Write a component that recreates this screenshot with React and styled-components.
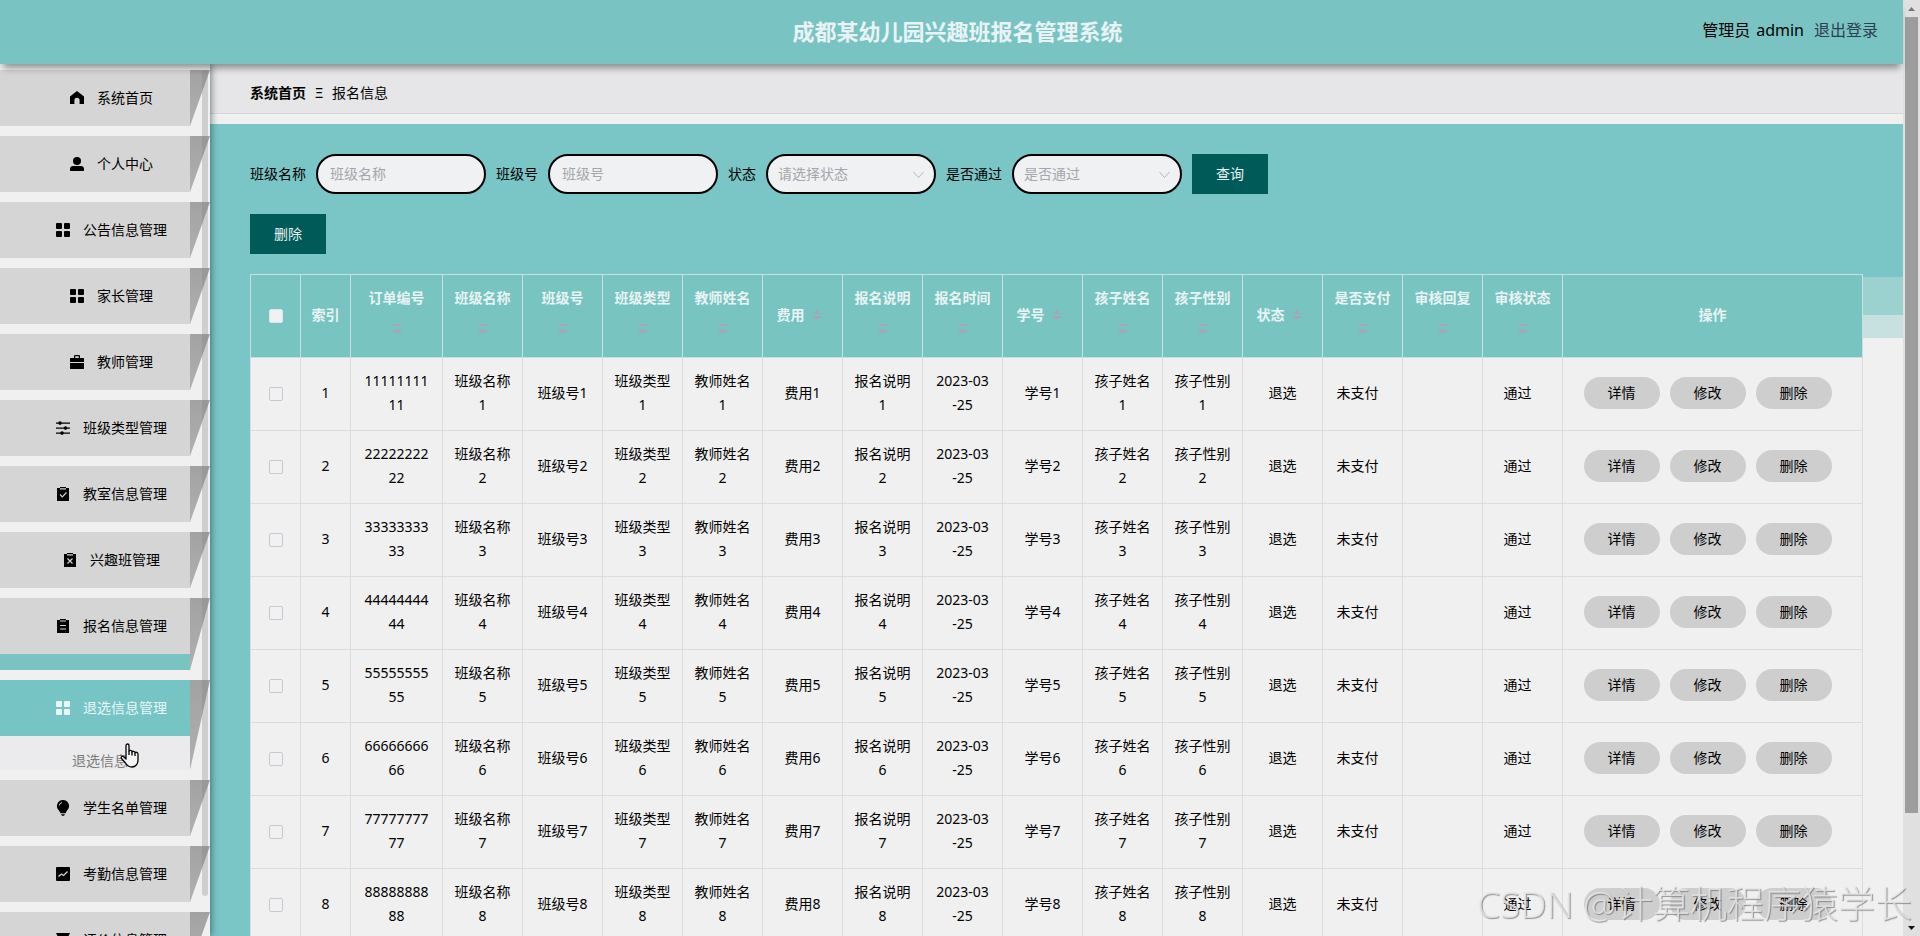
import React from 'react';
import styled, { createGlobalStyle, css } from 'styled-components';

const GlobalStyle = createGlobalStyle`
    * {
        box-sizing: border-box;
    }
    body {
        margin: 0;
        overflow: hidden;
        background: #f0f0f0;
        color: #000;
        font-family: "Noto Sans", "Noto Sans CJK SC", sans-serif;
        font-size: 14px;
    }
    button, input, select {
        font-family: inherit;
        font-size: 14px;
    }
`;

const Page = styled.div`
    display: flex;
    height: 100vh;
    overflow: hidden;
`;

const Shell = styled.div`
    display: flex;
    flex-direction: column;
    flex: 1;
    min-width: 0;
`;

const Header = styled.header`
    position: relative;
    z-index: 3;
    display: grid;
    grid-template-columns: 1fr auto 1fr;
    align-items: center;
    flex: none;
    height: 64px;
    padding: 0 25px 0 37px;
    background: #79c4c3;
    box-shadow: 0 7px 7px -3px rgba(0, 0, 0, 0.4);
`;

const Title = styled.h1`
    grid-column: 2;
    margin: 0;
    padding-bottom: 2px;
    color: #e8f3f6;
    font-size: 22px;
    line-height: 32px;
`;

const UserBar = styled.div`
    display: flex;
    justify-content: flex-end;
    gap: 10px;
    padding-bottom: 4px;
    font-size: 16px;
    line-height: 24px;
`;

const UserName = styled.span`
    display: flex;
    gap: 6px;
`;

const Logout = styled.a`
    color: #2c3e50;
    text-decoration: none;
`;

const Body = styled.div`
    display: flex;
    flex: 1;
    min-height: 0;
`;

const Sidebar = styled.nav`
    position: relative;
    z-index: 2;
    flex: none;
    width: 210px;
    padding-top: 6px;
    overflow: clip;
    overflow-clip-margin: 12px;
    background: #f0f0f0;
    box-shadow: 1px 0 7px rgba(0, 40, 30, 0.55);
`;

const MenuGroup = styled.div`
    display: flex;
    margin-bottom: 10px;
`;

const MenuMain = styled.div`
    width: 190px;
`;

const MenuItem = styled.a`
    display: flex;
    align-items: center;
    justify-content: center;
    gap: 8px;
    height: 56px;
    padding-left: 28px;
    background: ${(p) => (p.$active ? '#76c5c4' : '#d5d5d5')};
    color: ${(p) => (p.$active ? '#e8f6f8' : '#000')};
    text-decoration: none;
    line-height: 20px;
`;

const MenuIcon = styled.svg`
    flex: none;
    width: 24px;
    height: 14px;
`;

const Fold = styled.div`
    width: 20px;
    background: linear-gradient(#a2a2a2, #b0b0b0);
    clip-path: polygon(0 0, 100% 0, 0 100%);
`;

const Collapsing = styled.div`
    height: 16px;
    background: #79c4c0;
`;

const SubMenu = styled.div`
    height: 34px;
    padding: 15px 0 0 72px;
    overflow: hidden;
    background: #ebebed;
`;

const SubLink = styled.a`
    color: #7c7c7c;
    text-decoration: none;
    line-height: 20px;
`;

const SideThumb = styled.div`
    position: absolute;
    top: 6px;
    bottom: 40px;
    left: 202px;
    width: 6px;
    border-radius: 3px;
    background: rgba(130, 130, 135, 0.3);
`;

const Main = styled.main`
    display: flex;
    flex-direction: column;
    flex: 1;
    min-width: 0;
    overflow: hidden;
`;

const Breadcrumb = styled.div`
    display: flex;
    align-items: center;
    gap: 8px;
    flex: none;
    height: 50px;
    padding: 8px 40px 0;
    border-bottom: 1px solid #d6d6d8;
    background: #e6e5e7;
    line-height: 20px;
`;

const Separator = styled.span`
    width: 10px;
    font-size: 14px;
    text-align: center;
`;

// the fill fades out in steps along the right gutter
const Content = styled.section`
    flex: 1;
    min-height: 0;
    margin-top: 10px;
    padding: 30px 40px 0;
    background:
        linear-gradient(#7ac5c6, #7ac5c6) 0 0 / 40px 100% no-repeat,
        linear-gradient(#7ac5c6 153px, #9bd2cf 153px, #9bd2cf 191px, #c6e1e0 191px, #c6e1e0 214px, #f0f0f0 214px);
`;

const Filters = styled.form`
    display: flex;
    align-items: center;
    gap: 10px;
    margin-bottom: 20px;
`;

const Label = styled.label`
    line-height: 20px;
`;

const fieldStyle = css`
    width: 170px;
    height: 40px;
    padding: 0 12px 2px;
    border: 2px solid #000;
    border-radius: 20px;
    outline: none;
    background: #f0f1f2;
    color: #a3a6ac;
`;

const TextField = styled.input`
    ${fieldStyle}
    &::placeholder {
        color: #a3a6ac;
    }
`;

const SelectWrap = styled.div`
    position: relative;
`;

const SelectField = styled.select`
    ${fieldStyle}
    display: block;
    padding: 0 10px 2px;
    appearance: none;
`;

const Chevron = styled.svg`
    position: absolute;
    top: 17px;
    right: 12px;
    width: 11px;
    height: 8px;
    pointer-events: none;
`;

const SolidButton = styled.button`
    width: 76px;
    height: 40px;
    padding: 0 0 2px;
    border: 0;
    background: #005a58;
    color: #eaf3f3;
`;

const Toolbar = styled.div`
    display: flex;
    margin-bottom: 20px;
`;

const Table = styled.table`
    width: 100%;
    border-collapse: collapse;
    table-layout: fixed;
    background: #f0f0f0;
    line-height: 24px;
    text-align: center;
`;

const Col = styled.col`
    width: ${(p) => (p.$width ? `${p.$width}px` : 'auto')};
`;

const Th = styled.th`
    height: 83px;
    padding: 0 10px 2px;
    border: 1px solid #c6e0e4;
    background: #77c4c0;
    color: #e8f3f5;
`;

const HeadCell = styled.div`
    display: flex;
    flex-wrap: wrap;
    align-items: center;
    justify-content: center;
`;

const Caret = styled.svg`
    width: 24px;
    height: 34px;
`;

const Td = styled.td`
    height: 73px;
    padding: 0 ${(p) => (p.$loose ? '20px' : '10px')} 2px 10px;
    border: 1px solid #dcdcdf;
    white-space: pre-line;
    word-break: break-all;
`;

const Check = styled.input`
    display: block;
    width: 14px;
    height: 14px;
    margin: 2px auto 0;
    border: 1px solid ${(p) => (p.$head ? '#d8e6ea' : '#c9c9cc')};
    border-radius: 2px;
    appearance: none;
    background: #f0f1f3;
`;

const Actions = styled.div`
    display: flex;
    justify-content: center;
    gap: 4px;
    padding-right: 4px;
`;

const PillButton = styled.button`
    width: 76px;
    height: 32px;
    margin-right: 6px;
    padding: 0 0 2px;
    border: 0;
    border-radius: 16px;
    background: #cecece;
    color: #000;
`;

const ScrollTrack = styled.div`
    display: flex;
    flex-direction: column;
    align-items: center;
    flex: none;
    width: 17px;
    background: #e0e0e0;
`;

const ScrollArrow = styled.svg`
    flex: none;
    width: 17px;
    height: 17px;
`;

const ScrollThumb = styled.div`
    flex: 796;
    width: 13px;
    background: #9d9d9d;
`;

const ScrollRest = styled.div`
    flex: 106;
`;

const Watermark = styled.div`
    position: fixed;
    right: 8px;
    bottom: 6px;
    z-index: 5;
    color: rgba(232, 232, 232, 0.8);
    font-size: 37px;
    font-weight: 300;
    line-height: 52px;
    text-shadow: 1px 1px 1px rgba(110, 110, 110, 0.7);
    white-space: nowrap;
    pointer-events: none;
`;

const Pointer = styled.svg`
    position: absolute;
    top: 679px;
    left: 120px;
    width: 20px;
    height: 25px;
`;

const icons = {
    home: <path d="M7 0 0 5.6V13h4.4V9.4a2.6 2.6 0 0 1 5.2 0V13H14V5.6z" />,
    user: <path d="M7 0a4 4 0 1 1 0 8 4 4 0 0 1 0-8M3 9h8c2 0 3 1.400 3 3v2H0v-2c0-1.600 1-3 3-3" />,
    grid: (
        <g>
            <rect width="6" height="6" rx="1" />
            <rect x="8" width="6" height="6" rx="1" />
            <rect y="8" width="6" height="6" rx="1" />
            <rect x="8" y="8" width="6" height="6" rx="1" />
        </g>
    ),
    case: <path d="M4 3V1.200C4 .5 4.500 0 5.200 0h3.600C9.500 0 10 .5 10 1.200V3h3.500l.5.5V7H0V3.500L.5 3zm1.200 0h3.600V1.200H5.200zM0 8h14v5.500l-.5.500H.5l-.5-.5z" />,
    sliders: (
        <g>
            <path d="M0 1.500h14v1.200H0zM0 6.500h14v1.200H0zM0 11.500h14v1.200H0z" />
            <circle cx="4" cy="2.100" r="1.800" />
            <circle cx="9.500" cy="7.100" r="1.800" />
            <circle cx="6" cy="12.100" r="1.800" />
        </g>
    ),
    claim: (
        <g>
            <path d="M1 1h3V0h6v1h3v13H1z" />
            <path d="M4 1.800h6M4 7.500l2.300 2.300 4.200-4.300" fill="none" stroke="#d5d5d5" strokeWidth="1.200" />
        </g>
    ),
    release: (
        <g>
            <path d="M1 1h3V0h6v1h3v13H1z" />
            <path d="M4 1.800h6M4.500 5.500l5 5M9.500 5.500l-5 5" fill="none" stroke="#d5d5d5" strokeWidth="1.200" />
        </g>
    ),
    order: (
        <g>
            <path d="M1 1h3V0h6v1h3v13H1z" />
            <path d="M4 2h6M4 6.500h6M4 10h6" fill="none" stroke="#d5d5d5" strokeWidth="1.200" />
        </g>
    ),
    bulb: (
        <g>
            <path d="M7-1a6 6 0 0 1 4 10.500L9.500 12.300h-5L3 9.500A6 6 0 0 1 7-1M5 13.300h4l-1 1.400H6z" />
            <path d="M3.200 4.500A3.500 3.500 0 0 1 6 1.500" fill="none" stroke="#d5d5d5" strokeWidth="1" />
        </g>
    ),
    chart: (
        <g>
            <rect width="14" height="14" rx="1" />
            <path d="M2.500 9.500 5.500 7l2 1.500L11.500 4.500" fill="none" stroke="#d5d5d5" strokeWidth="1.200" />
        </g>
    ),
    shop: <path d="M0 0h14l-2 4 2 3v7H0V7l2-3z" />,
};

const menu = [
    { icon: 'home', text: '系统首页' },
    { icon: 'user', text: '个人中心' },
    { icon: 'grid', text: '公告信息管理' },
    { icon: 'grid', text: '家长管理' },
    { icon: 'case', text: '教师管理' },
    { icon: 'sliders', text: '班级类型管理' },
    { icon: 'claim', text: '教室信息管理' },
    { icon: 'release', text: '兴趣班管理' },
    { icon: 'order', text: '报名信息管理', collapsing: true },
    { icon: 'grid', text: '退选信息管理', active: true, child: '退选信息' },
    { icon: 'bulb', text: '学生名单管理' },
    { icon: 'chart', text: '考勤信息管理' },
    { icon: 'shop', text: '评价信息管理' },
];

const columns = [
    '订单编号', '班级名称', '班级号', '班级类型', '教师姓名', '费用', '报名说明', '报名时间',
    '学号', '孩子姓名', '孩子性别', '状态', '是否支付', '审核回复', '审核状态',
];

const rows = [1, 2, 3, 4, 5, 6, 7, 8].map((n) => ({
    id: n,
    cells: [
        String(n).repeat(10), `班级名称${n}`, `班级号${n}`, `班级类型${n}`, `教师姓名${n}`,
        `费用${n}`, `报名说明${n}`, '2023-03\n-25', `学号${n}`, `孩子姓名${n}`, `孩子性别${n}`,
        '退选', '未支付', '', '通过',
    ],
}));

const SortCaret = ({ inline }) => (
    <Caret viewBox="0 0 24 34" fill="#a7a3b8" aria-hidden="true">
        {inline ? (
            <path d="M11 12h2v3h3v1H8v-1h3zM8 18h8v2h-2v1h-4v-1H8z" />
        ) : (
            <path d="M8 14h8v2H8zM8 19h8v4H8z" opacity=".85" />
        )}
    </Caret>
);

const SelectBox = ({ id, text }) => (
    <SelectWrap>
        <SelectField id={id} defaultValue="">
            <option value="">{text}</option>
        </SelectField>
        <Chevron viewBox="0 0 11 8" fill="none" stroke="#b4b7bc">
            <path d="M0.500 1 5.500 6.500 10.500 1" />
        </Chevron>
    </SelectWrap>
);

const SideMenu = () => (
    <Sidebar>
        {menu.map((item) => (
            <MenuGroup key={item.text}>
                <MenuMain>
                    <MenuItem href="#" $active={item.active}>
                        <MenuIcon viewBox="0 0 14 14" fill="currentColor" overflow="visible">{icons[item.icon]}</MenuIcon>
                        <span>{item.text}</span>
                    </MenuItem>
                    {item.collapsing && <Collapsing />}
                    {item.child && (
                        <SubMenu>
                            <SubLink href="#">{item.child}</SubLink>
                        </SubMenu>
                    )}
                </MenuMain>
                <Fold />
            </MenuGroup>
        ))}
        <SideThumb />
        <Pointer viewBox="0 0 20 25" fill="#f4f4f4" stroke="#000" strokeWidth="1.300" strokeLinejoin="round">
            <path d="M6 14V2.500c0-2 3-2 3 0V8c.5-1 2.800-.8 3 .8.600-1 2.800-.6 3 .8.800-.8 3-.2 3 1.600V17c0 4-2.500 7-6 7-3.500 0-5-1.500-6.500-4L1.500 15.500c-1-1.800.8-3 2.200-1.800L6 16z" />
            <path d="M9 8v4M12 9v3.500M15 10v3" fill="none" />
        </Pointer>
    </Sidebar>
);

const DataTable = () => (
    <Table>
        <colgroup>
            <Col $width={50} />
            <Col $width={50} />
            {columns.map((name, i) => (
                <Col key={name} $width={i === 0 ? 92 : 80} />
            ))}
            <Col />
        </colgroup>
        <thead>
            <tr>
                <Th><Check type="checkbox" aria-label="全选" $head /></Th>
                <Th>索引</Th>
                {columns.map((name) => (
                    <Th key={name}>
                        <HeadCell>
                            <span>{name}</span>
                            <SortCaret inline={name.length < 3} />
                        </HeadCell>
                    </Th>
                ))}
                <Th>操作</Th>
            </tr>
        </thead>
        <tbody>
            {rows.map((row) => (
                <tr key={row.id}>
                    <Td><Check type="checkbox" aria-label={`选择${row.id}`} /></Td>
                    <Td>{row.id}</Td>
                    {row.cells.map((cell, i) => (
                        <Td key={columns[i]} $loose={i === 12 || i === 14}>{cell}</Td>
                    ))}
                    <Td>
                        <Actions>
                            <PillButton type="button">详情</PillButton>
                            <PillButton type="button">修改</PillButton>
                            <PillButton type="button">删除</PillButton>
                        </Actions>
                    </Td>
                </tr>
            ))}
        </tbody>
    </Table>
);

const App = () => {
    return (
        <Page>
            <GlobalStyle />
            <Shell>
                <Header>
                    <Title>成都某幼儿园兴趣班报名管理系统</Title>
                    <UserBar>
                        <UserName>
                            <span>管理员</span>
                            <span>admin</span>
                        </UserName>
                        <Logout href="#">退出登录</Logout>
                    </UserBar>
                </Header>
                <Body>
                    <SideMenu />
                    <Main>
                        <Breadcrumb>
                            <strong>系统首页</strong>
                            <Separator>Ξ</Separator>
                            <span>报名信息</span>
                        </Breadcrumb>
                        <Content>
                            <Filters>
                                <Label htmlFor="className">班级名称</Label>
                                <TextField id="className" placeholder="班级名称" />
                                <Label htmlFor="classNo">班级号</Label>
                                <TextField id="classNo" placeholder="班级号" />
                                <Label htmlFor="status">状态</Label>
                                <SelectBox id="status" text="请选择状态" />
                                <Label htmlFor="passed">是否通过</Label>
                                <SelectBox id="passed" text="是否通过" />
                                <SolidButton type="button">查询</SolidButton>
                            </Filters>
                            <Toolbar>
                                <SolidButton type="button">删除</SolidButton>
                            </Toolbar>
                            <DataTable />
                        </Content>
                    </Main>
                </Body>
            </Shell>
            <ScrollTrack>
                <ScrollArrow viewBox="0 0 17 17" fill="#777">
                    <path d="M8.500 7 12 11H5z" />
                </ScrollArrow>
                <ScrollThumb />
                <ScrollRest />
                <ScrollArrow viewBox="0 0 17 17" fill="#111">
                    <path d="M8.500 11 12 7H5z" />
                </ScrollArrow>
            </ScrollTrack>
            <Watermark>CSDN @计算机程序猿学长</Watermark>
        </Page>
    );
};

export default App;
